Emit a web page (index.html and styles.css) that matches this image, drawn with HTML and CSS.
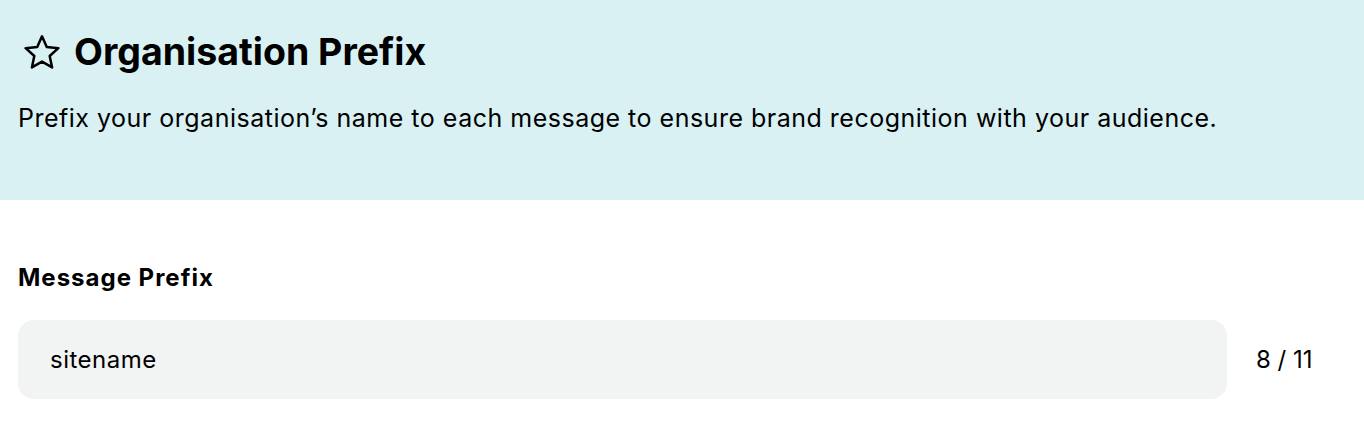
FILE: index.html
```html
<!DOCTYPE html>
<html lang="en">
<head>
<meta charset="utf-8">
<title>Organisation Prefix</title>
<link rel="stylesheet" href="styles.css">
</head>
<body>
<section class="hero">
  <h1 class="title">
    <svg class="star" viewBox="0 0 36 34" width="36" height="34" aria-hidden="true">
      <path d="M18 1.3L22.75 11.96 34.36 13.19 25.69 21 28.11 32.41 18 26.58 7.89 32.41 10.31 21 1.64 13.19 13.25 11.96Z" fill="none" stroke="#000" stroke-width="2.5" stroke-linejoin="round"/>
    </svg>
    <span>Organisation Prefix</span>
  </h1>
  <p class="desc">Prefix your organisation’s name to each message to ensure brand recognition with your audience.</p>
</section>
<section class="form">
  <label class="label" for="prefix">Message Prefix</label>
  <div class="row">
    <div class="field"><input id="prefix" class="input" type="text" value="sitename"></div>
    <span class="count">8 / 11</span>
  </div>
</section>
</body>
</html>
```
FILE: styles.css
```css
html, body {
  margin: 0;
  padding: 0;
  background: #fff;
  color: #000;
  font-family: "Inter", "Open Sans", sans-serif;
  font-variant-ligatures: none;
}
.hero {
  background: #d9f1f3;
  height: 200px;
  box-sizing: border-box;
  padding: 29px 18px 0;
}
.title {
  display: flex;
  align-items: center;
  gap: 14px;
  margin: 0;
  font-size: 37.5px;
  font-weight: 700;
  line-height: 46px;
  padding-left: 6px;
}
.star { display: block; }
.desc {
  margin: 28px 0 0;
  font-size: 25px;
  line-height: 30px;
  letter-spacing: 0.5px;
}
.form {
  padding: 63px 18px 0;
}
.label {
  display: block;
  font-size: 24px;
  font-weight: 700;
  line-height: 30px;
  letter-spacing: 1px;
}
.row {
  display: flex;
  align-items: center;
  margin-top: 27px;
}
.field {
  width: 1209px;
  height: 79px;
  background: #f2f3f3;
  border-radius: 16px;
  display: flex;
  align-items: center;
  padding: 0 32px;
  box-sizing: border-box;
}
.input {
  border: 0;
  background: transparent;
  font-family: inherit;
  font-size: 24px;
  letter-spacing: 0.5px;
  color: #000;
  width: 100%;
  outline: none;
  padding: 0;
}
.count {
  margin-left: 29px;
  font-size: 24px;
}
```
